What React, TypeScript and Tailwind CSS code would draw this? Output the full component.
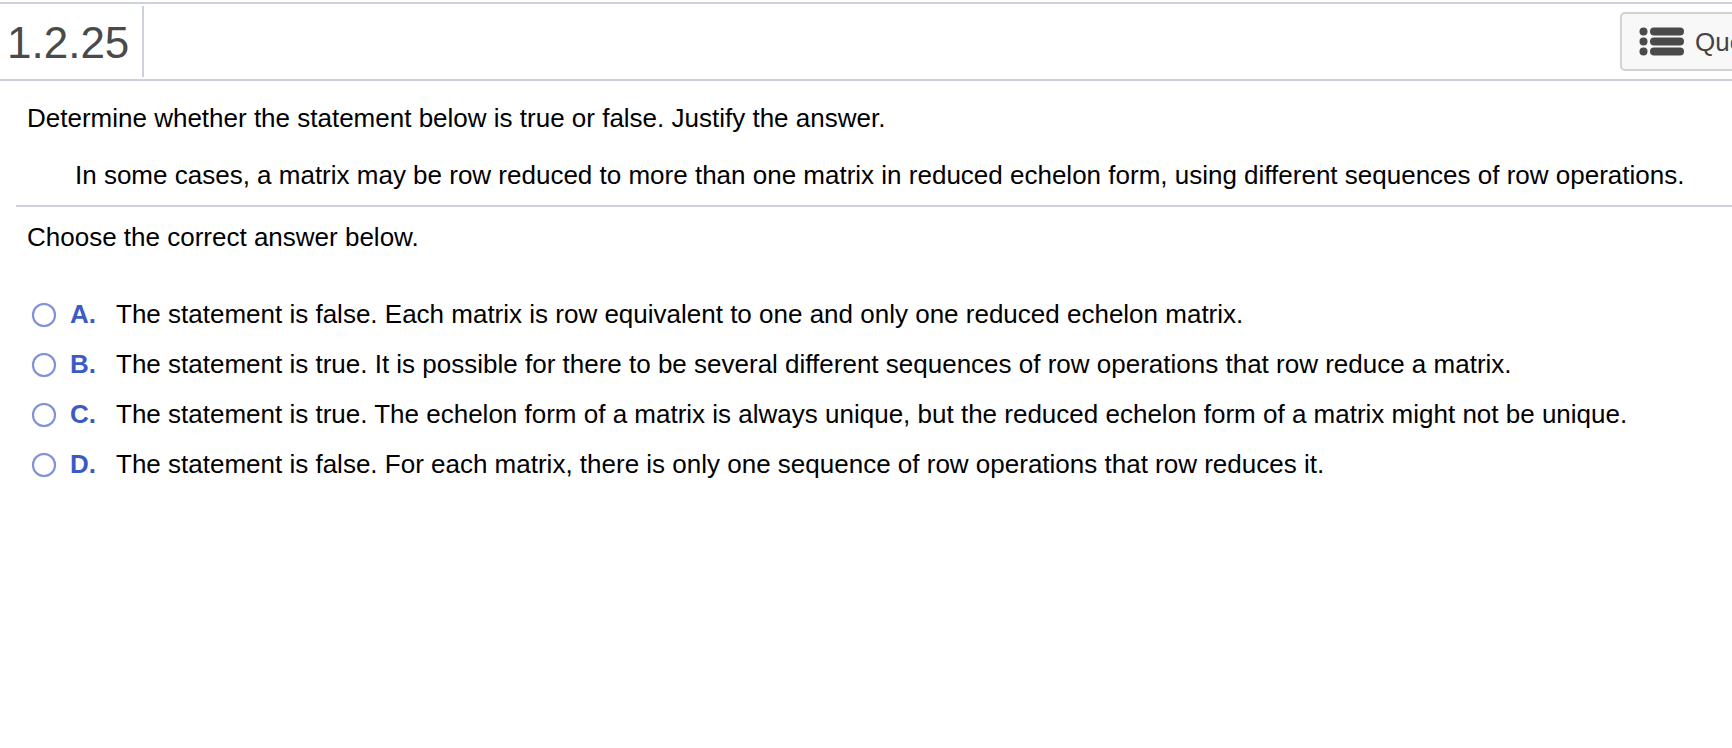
import React from "react";

const OPTIONS = [
  { key: "A", text: "The statement is false. Each matrix is row equivalent to one and only one reduced echelon matrix." },
  { key: "B", text: "The statement is true. It is possible for there to be several different sequences of row operations that row reduce a matrix." },
  { key: "C", text: "The statement is true. The echelon form of a matrix is always unique, but the reduced echelon form of a matrix might not be unique." },
  { key: "D", text: "The statement is false. For each matrix, there is only one sequence of row operations that row reduces it." },
];

function ListIcon() {
  return (
    <svg width="45" height="29" viewBox="0 0 45 29" className="shrink-0">
      <g fill="#4a4a4a">
        <circle cx="4.5" cy="4.5" r="4" />
        <circle cx="4.5" cy="14.5" r="4" />
        <circle cx="4.5" cy="24.5" r="4" />
        <rect x="11" y="0.5" width="34" height="8" rx="4" />
        <rect x="11" y="10.5" width="34" height="8" rx="4" />
        <rect x="11" y="20.5" width="34" height="8" rx="4" />
      </g>
    </svg>
  );
}

export default function App() {
  return (
    <div className="h-[748px] w-full overflow-hidden bg-white pt-[2px] font-['Liberation_Sans',Arial,sans-serif] text-black">
      <header className="flex h-[79px] items-stretch border-y-2 border-[#cdd1dc]">
        <div className="my-[2px] flex w-[144px] shrink-0 items-center border-r-2 border-[#cdd1dc] pl-[7px] pt-[3px]">
          <span className="text-[44px] leading-[44px] text-[#4a4a4a]">1.2.25</span>
        </div>
        <div className="flex flex-1 items-center justify-end">
          <button
            type="button"
            className="-mr-[150px] flex h-[59px] w-[262px] shrink-0 items-center gap-[11px] rounded-[5px] border-2 border-[#d2d2d2] bg-[#f8f8f8] pl-[17px] text-[26px] leading-[30px] text-[#444]"
          >
            <ListIcon />
            <span className="whitespace-nowrap">Question Help</span>
          </button>
        </div>
      </header>

      <div className="pt-[22px]">
        <p className="pl-[27px] text-[26px] leading-[30px]">
          Determine whether the statement below is true or false. Justify the answer.
        </p>
        <p className="mt-[27px] pl-[75px] text-[26px] leading-[30px]">
          In some cases, a matrix may be row reduced to more than one matrix in reduced echelon form, using different
          sequences of row operations.
        </p>
        <div className="ml-[16px] mt-[15px] border-t-2 border-[#cdd1dc]" />
        <p className="mt-[15px] pl-[27px] text-[26px] leading-[30px]">Choose the correct answer below.</p>

        <div className="mt-[47px] flex flex-col gap-[20px] pl-[32px]">
          {OPTIONS.map((option) => (
            <label key={option.key} className="flex items-start text-[26px] leading-[30px]">
              <span className="mt-[4px] h-[24px] w-[24px] shrink-0 rounded-full border-[2.5px] border-[#7f90d6] bg-white shadow-[0_0_1px_rgba(80,100,200,0.4)]" />
              <span className="ml-[14px] w-[46px] shrink-0 font-bold text-[#3b5bc4]">{option.key}.</span>
              <span className="whitespace-nowrap">{option.text}</span>
            </label>
          ))}
        </div>
      </div>
    </div>
  );
}
